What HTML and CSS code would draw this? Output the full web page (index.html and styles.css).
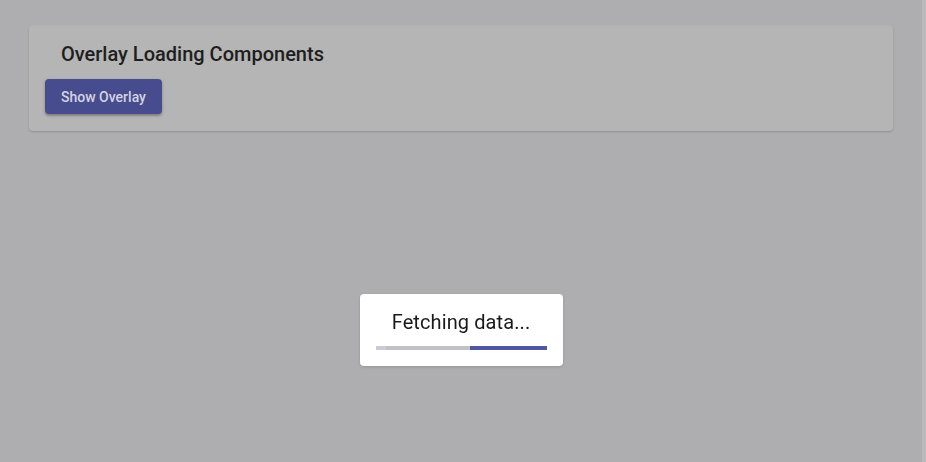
FILE: index.html
```html
<!DOCTYPE html>
<html lang="en">
<head>
<meta charset="utf-8">
<title>Overlay Loading Components</title>
<link rel="stylesheet" href="styles.css">
</head>
<body>
<main class="page">
  <section class="card">
    <h2 class="card-title">Overlay Loading Components</h2>
    <button class="btn" type="button">Show Overlay</button>
  </section>
</main>
<div class="overlay">
  <div class="dialog">
    <p class="dialog-text">Fetching data...</p>
    <div class="progress">
      <div class="progress-buffer"></div>
      <div class="progress-bar"></div>
    </div>
  </div>
</div>
<div class="scroll-edge"></div>
</body>
</html>
```

FILE: styles.css
```css
* { box-sizing: border-box; }
html, body { height: 100%; }
body {
  margin: 0;
  background: #aeaeb0;
  font-family: Roboto, "Noto Sans", "Liberation Sans", sans-serif;
  color: #1b1b1b;
  overflow: hidden;
}
.page {
  padding: 26px 33px 0 29px;
}
.card {
  background: #b5b5b5;
  border-radius: 4px;
  padding: 16px 16px 17px;
  box-shadow: 0 1px 2px rgba(0,0,0,0.18), 0 -1px 0 #b3b3b3;
  height: 105px;
}
.card-title {
  margin: 0 16px 13px;
  font-size: 20px;
  line-height: 24px;
  font-weight: 500;
  letter-spacing: 0;
  color: #1e1e1e;
}
.btn {
  display: block;
  height: 35px;
  width: 117px;
  border: 0;
  border-radius: 4px;
  background: #474c8f;
  color: #d4d4e0;
  font-family: Roboto, "Noto Sans", "Liberation Sans", sans-serif;
  font-size: 14px;
  font-weight: 500;
  padding: 0;
  box-shadow: 0 2px 2px rgba(0,0,0,0.22), 0 1px 4px rgba(0,0,0,0.12);
}
.overlay {
  position: fixed;
  inset: 0 4px 0 0;
  display: flex;
  justify-content: center;
  align-items: flex-start;
  padding-top: 294px;
}
.dialog {
  width: 203px;
  height: 72px;
  background: #ffffff;
  border-radius: 4px;
  padding: 16px 16px 16px;
  box-shadow: 0 1px 3px rgba(0,0,0,0.15);
}
.dialog-text {
  margin: 0 0 12px;
  text-align: center;
  font-size: 20px;
  line-height: 24px;
  font-weight: 400;
  letter-spacing: 0.1px;
  color: #1a1a1a;
}
.progress {
  position: relative;
  height: 4px;
  background: #c9c8dc;
  overflow: hidden;
}
.progress-buffer {
  position: absolute;
  top: 0;
  bottom: 0;
  left: 6%;
  width: 49%;
  background: #c2c2c6;
}
.progress-bar {
  position: absolute;
  top: 0;
  bottom: 0;
  left: 55%;
  right: 0;
  background: #5158a3;
}
.scroll-edge {
  position: fixed;
  top: 0;
  right: 0;
  bottom: 0;
  width: 4px;
  background: #b9b9bb;
}
```
